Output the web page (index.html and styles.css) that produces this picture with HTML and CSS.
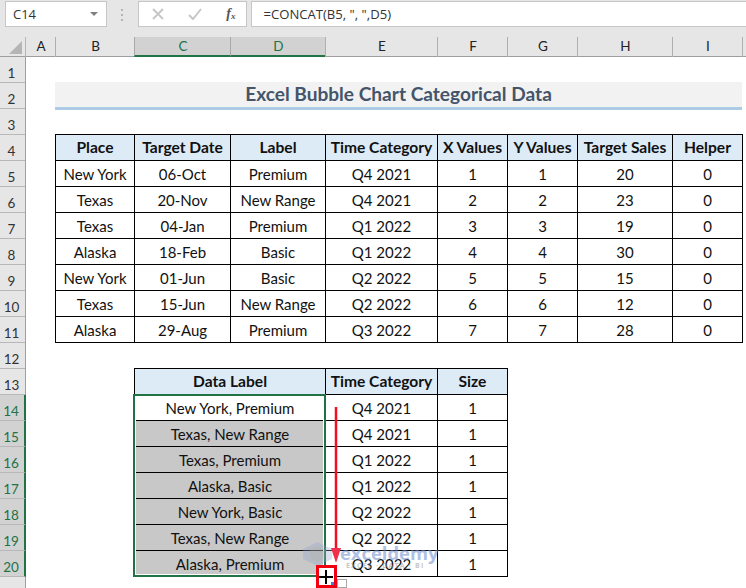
FILE: index.html
```html
<!DOCTYPE html>
<html lang="en">
<head>
<meta charset="utf-8">
<title>Excel Bubble Chart Categorical Data</title>
<link rel="stylesheet" href="styles.css">
</head>
<body>
<div class="app">
  <div class="formula-bar">
    <div class="name-box"><span>C14</span><svg class="caret" width="9" height="5" viewBox="0 0 9 5"><path d="M0 0h8L4 4z" fill="#808080"/></svg></div>
    <svg class="grip" width="4" height="14" viewBox="0 0 4 14"><path d="M1 1h2v2H1zM1 6h2v2H1zM1 11h2v2H1z" fill="#b4b4b4"/></svg>
    <div class="fx-box">
      <svg width="12" height="12" viewBox="0 0 12 12"><path d="M1 1l10 10M11 1L1 11" stroke="#c6c6c6" stroke-width="1.800" fill="none"/></svg>
      <svg width="14" height="12" viewBox="0 0 14 12"><path d="M1 7l4 4 8-10" stroke="#c6c6c6" stroke-width="2" fill="none"/></svg>
      <span class="fx">f<sub>x</sub></span>
    </div>
    <div class="formula">=CONCAT(B5, ", ",D5)</div>
  </div>
  <div class="col-heads">
    <div class="corner"><svg width="13" height="13" viewBox="0 0 13 13"><path d="M13 0v13H0z" fill="#b5b5b5"/></svg></div>
    <div class="ch first">A</div><div class="ch">B</div><div class="ch sel">C</div><div class="ch sel">D</div><div class="ch">E</div><div class="ch">F</div><div class="ch">G</div><div class="ch">H</div><div class="ch">I</div><div class="ch"></div>
  </div>
  <div class="body">
    <div class="row-heads">
      <div class="rh">1</div><div class="rh">2</div><div class="rh">3</div><div class="rh">4</div><div class="rh">5</div><div class="rh">6</div><div class="rh">7</div><div class="rh">8</div><div class="rh">9</div><div class="rh">10</div><div class="rh">11</div><div class="rh">12</div><div class="rh">13</div>
      <div class="rh sel">14</div><div class="rh sel">15</div><div class="rh sel">16</div><div class="rh sel">17</div><div class="rh sel">18</div><div class="rh sel">19</div><div class="rh sel">20</div><div class="rh"></div>
    </div>
    <div class="sheet">
      <div class="title">Excel Bubble Chart Categorical Data</div>
      <table class="tbl main">
        <colgroup><col class="w79"><col class="w96"><col class="w95"><col class="w112"><col class="w70"><col class="w70"><col class="w95"><col class="w70"></colgroup>
        <tr><th>Place</th><th>Target Date</th><th>Label</th><th>Time Category</th><th>X Values</th><th>Y Values</th><th>Target Sales</th><th>Helper</th></tr>
        <tr><td>New York</td><td>06-Oct</td><td>Premium</td><td>Q4 2021</td><td>1</td><td>1</td><td>20</td><td>0</td></tr>
        <tr><td>Texas</td><td>20-Nov</td><td>New Range</td><td>Q4 2021</td><td>2</td><td>2</td><td>23</td><td>0</td></tr>
        <tr><td>Texas</td><td>04-Jan</td><td>Premium</td><td>Q1 2022</td><td>3</td><td>3</td><td>19</td><td>0</td></tr>
        <tr><td>Alaska</td><td>18-Feb</td><td>Basic</td><td>Q1 2022</td><td>4</td><td>4</td><td>30</td><td>0</td></tr>
        <tr><td>New York</td><td>01-Jun</td><td>Basic</td><td>Q2 2022</td><td>5</td><td>5</td><td>15</td><td>0</td></tr>
        <tr><td>Texas</td><td>15-Jun</td><td>New Range</td><td>Q2 2022</td><td>6</td><td>6</td><td>12</td><td>0</td></tr>
        <tr><td>Alaska</td><td>29-Aug</td><td>Premium</td><td>Q3 2022</td><td>7</td><td>7</td><td>28</td><td>0</td></tr>
      </table>
      <div class="second">
        <table class="tbl">
          <colgroup><col class="w191"><col class="w112"><col class="w70"></colgroup>
          <tr><th>Data Label</th><th>Time Category</th><th>Size</th></tr>
          <tr><td>New York, Premium</td><td>Q4 2021</td><td>1</td></tr>
          <tr><td class="grey">Texas, New Range</td><td>Q4 2021</td><td>1</td></tr>
          <tr><td class="grey">Texas, Premium</td><td>Q1 2022</td><td>1</td></tr>
          <tr><td class="grey">Alaska, Basic</td><td>Q1 2022</td><td>1</td></tr>
          <tr><td class="grey">New York, Basic</td><td>Q2 2022</td><td>1</td></tr>
          <tr><td class="grey">Texas, New Range</td><td>Q2 2022</td><td>1</td></tr>
          <tr><td class="grey">Alaska, Premium</td><td>Q3 2022</td><td>1</td></tr>
        </table>
        <div class="selection"></div>
        <svg class="arrow" width="12" height="158" viewBox="0 0 12 158"><path d="M6 0v146" stroke="#f01020" stroke-width="2.500" fill="none"/><path d="M1 141h10l-5 15z" fill="#f0304a"/></svg>
        <div class="mark">
          <svg width="31" height="24" viewBox="0 0 31 24"><path d="M15.500 0L30 7v10l-14.500 7L1 17V7z" fill="#8fa3c9" opacity=".6"/><path d="M8 8l7-4 8 4v8l-8 4-7-4z" fill="#a8a8a8" opacity=".7"/></svg>
          <div class="mark-text"><span class="mark-name">exceldemy</span><span class="mark-sub">EXCEL · DATA · BI</span></div>
        </div>
        <div class="autofill"></div>
        <div class="handle"><span class="plus"></span><span class="dot"></span></div>
      </div>
    </div>
  </div>
</div>
</body>
</html>
```
FILE: styles.css
```css
* { box-sizing: border-box; }
html, body { margin: 0; padding: 0; }
body { width: 746px; height: 588px; overflow: hidden; background: #fff; font-family: Lato, "Open Sans", sans-serif; color: #111; }
.app { width: 746px; height: 588px; display: flex; flex-direction: column; overflow: hidden; }

.formula-bar { height: 37px; flex: none; display: flex; align-items: flex-start; background: #e6e6e6; padding: 1px 0 0 5px; }
.name-box { width: 102px; height: 26px; background: #fff; border: 1px solid #c6c6c6; display: flex; align-items: center; justify-content: space-between; padding: 0 6px 0 7px; font: 13px "Open Sans", sans-serif; color: #333; }
.caret { margin-right: 1px; }
.grip { margin: 7px 0 0 13px; }
.fx-box { width: 110px; height: 26px; margin-left: 14px; background: #fff; border: 1px solid #c6c6c6; display: flex; align-items: center; justify-content: space-between; padding: 0 11px 0 13px; }
.fx { font: italic 700 14px "Liberation Serif", serif; color: #555; line-height: 1; }
.fx sub { font-size: 9px; vertical-align: -1px; line-height: 0; }
.formula { width: 496px; height: 26px; margin-left: 4px; background: #fff; border: 1px solid #c6c6c6; border-right: 0; padding-left: 11px; font: 13.100px/24px "Open Sans", sans-serif; color: #333; white-space: nowrap; }

.col-heads { height: 20px; flex: none; display: grid; grid-template-columns: 26px 29px 79px 96px 95px 112px 70px 70px 95px 70px 4px; background: #e6e6e6; border-bottom: 1px solid #9e9e9e; }
.corner { display: flex; align-items: flex-end; justify-content: flex-end; padding: 0 3px 3px 0; border-right: 1px solid #b5b5b5; }
.ch { font-size: 13.500px; line-height: 19px; text-align: center; border-left: 1px solid #b0b0b0; color: #222; padding-left: 1px; }
.ch.first { border-left: 0; }
.ch.sel { background: #d2d2d2; color: #217346; height: 20px; border-bottom: 2px solid #217346; border-left-color: #a8a8a8; }

.body { flex: 1; display: flex; min-height: 0; }
.row-heads { width: 26px; flex: none; background: #e6e6e6; border-right: 1px solid #9e9e9e; }
.rh { height: 26px; font-size: 13.500px; line-height: 26px; padding: 3px 2px 0 0; text-align: center; color: #333; border-bottom: 1px solid #b8b8b8; }
.rh.sel { background: #d2d2d2; color: #217346; border-right: 2px solid #217346; margin-right: -1px; }

.sheet { flex: 1; padding: 25px 0 0 29px; min-width: 0; }
.title { width: 687px; height: 28px; background: #f2f2f2; border-bottom: 3px solid #aecbe6; font-size: 19.100px; font-weight: 700; line-height: 24px; text-align: center; color: #44546a; }

.tbl { border-collapse: collapse; table-layout: fixed; font-size: 15px; color: #111; }
.tbl th, .tbl td { height: 26px; padding: 0; border: 1px solid #000; text-align: center; white-space: nowrap; overflow: hidden; }
.tbl th { background: #ddebf7; font-weight: 700; font-size: 15.600px; line-height: 24px; padding-bottom: 1px; }
.tbl td.grey { background: #c8c8c8; }
.main { margin-top: 24px; width: 688px; }
.w70 { width: 70px; } .w79 { width: 79px; } .w95 { width: 95px; } .w96 { width: 96px; } .w112 { width: 112px; } .w191 { width: 191px; }

.second { position: relative; margin: 25px 0 0 79px; width: 373px; }
.second .tbl { width: 373px; }
.selection { position: absolute; left: -1px; top: 26px; width: 193px; height: 183px; border: 2px solid #217346; box-shadow: inset 0 0 0 1px #fff; pointer-events: none; }
.arrow { position: absolute; left: 196px; top: 39px; }
.mark { position: absolute; left: 168px; top: 174px; display: flex; align-items: flex-start; gap: 7px; opacity: .55; }
.mark-text { display: flex; flex-direction: column; line-height: 1; }
.mark-name { font: 700 18.400px/21px "Open Sans", sans-serif; color: #6f8ed0; }
.mark-sub { font: 700 7px/8px "Open Sans", sans-serif; color: #9a9a9a; letter-spacing: 1.200px; margin: -1px 0 0 6px; }
.autofill { position: absolute; left: 203px; top: 211px; width: 10px; height: 9px; background: #fff; border: 1px solid #a8a8a8; }
.handle { position: absolute; left: 182px; top: 197px; width: 21px; height: 23px; border: 3px solid #f00010; background: #fff; }
.plus { position: absolute; left: 0; top: 2px; width: 14px; height: 14px; background: linear-gradient(#000, #000) center / 100% 2px no-repeat, linear-gradient(#000, #000) center / 2px 100% no-repeat; }
.dot { position: absolute; right: 0; bottom: 0; width: 3px; height: 3px; background: #3f7fe0; }
```
